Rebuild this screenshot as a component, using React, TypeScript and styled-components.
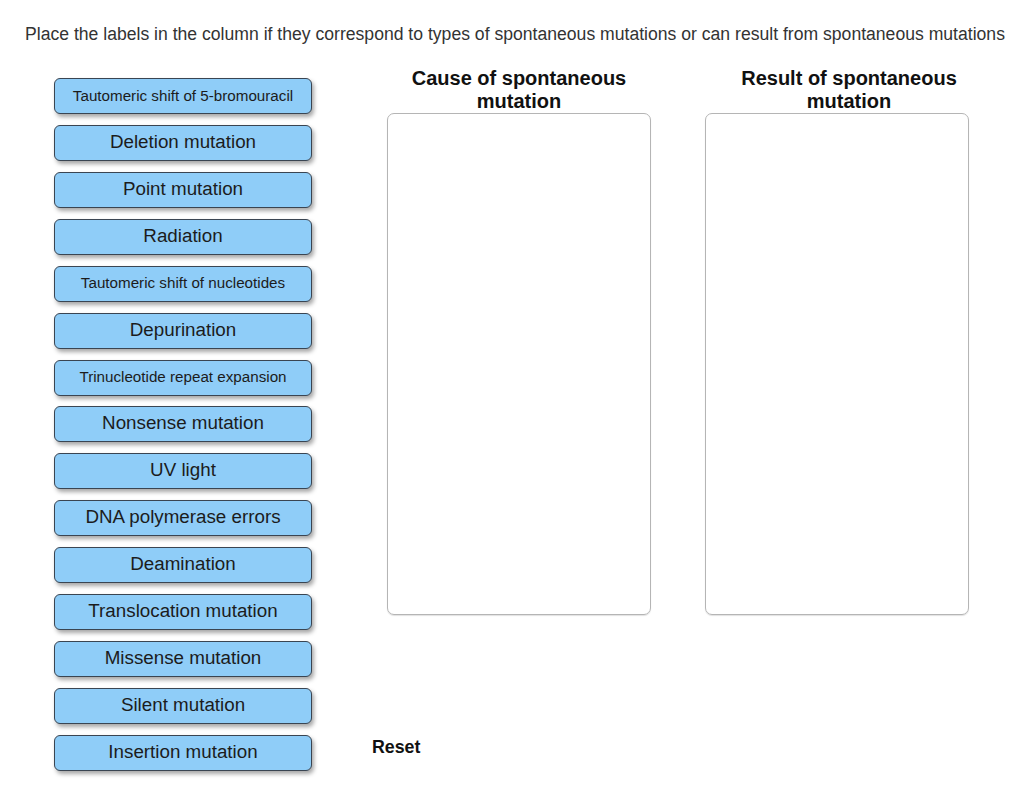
import styled, { createGlobalStyle } from "styled-components"

const labels: { text: string; small?: boolean }[] = [
    { text: "Tautomeric shift of 5-bromouracil", small: true },
    { text: "Deletion mutation" },
    { text: "Point mutation" },
    { text: "Radiation" },
    { text: "Tautomeric shift of nucleotides", small: true },
    { text: "Depurination" },
    { text: "Trinucleotide repeat expansion", small: true },
    { text: "Nonsense mutation" },
    { text: "UV light" },
    { text: "DNA polymerase errors" },
    { text: "Deamination" },
    { text: "Translocation mutation" },
    { text: "Missense mutation" },
    { text: "Silent mutation" },
    { text: "Insertion mutation" },
]

// offset nudges the heading sideways over its drop zone
const columns = [
    { title: "Cause of spontaneous mutation", offset: 0 },
    { title: "Result of spontaneous mutation", offset: 24 },
]

export default function App() {
    return (
        <>
            <GlobalStyle />
            <Page>
                <Instructions>
                    Place the labels in the column if they correspond to types of spontaneous mutations or can result from spontaneous mutations
                </Instructions>
                <Workspace>
                    <LabelList>
                        {labels.map((l) => (
                            <Label key={l.text} $small={l.small}>{l.text}</Label>
                        ))}
                    </LabelList>
                    <Board>
                        <Columns>
                            {columns.map((c) => (
                                <Column key={c.title}>
                                    <ColumnTitle $offset={c.offset}>{c.title}</ColumnTitle>
                                    <DropZone />
                                </Column>
                            ))}
                        </Columns>
                        <ResetButton type="button">Reset</ResetButton>
                    </Board>
                </Workspace>
            </Page>
        </>
    )
}

const GlobalStyle = createGlobalStyle`
    body{
        margin: 0;
        background: #fff;
        font-family: "Liberation Sans", Arial, sans-serif;
    }
`
const Page = styled.div`
    width: 1024px;
    height: 801px;
    padding-top: 24px;
    box-sizing: border-box;
`
const Instructions = styled.p`
    margin: 0 0 0 25px;
    font-size: 17.6px;
    line-height: 20px;
    color: #333;
    white-space: nowrap;
`
const Workspace = styled.div`
    display: flex;
    margin-top: 23px;
`
const LabelList = styled.div`
    display: flex;
    flex-direction: column;
    gap: 10.93px;
    margin: 11px 0 0 54px;
`
const Label = styled.div<{ $small?: boolean }>`
    width: 258px;
    height: 36px;
    box-sizing: border-box;
    padding-bottom: 2px;
    display: flex;
    align-items: center;
    justify-content: center;
    background: #8fcdf8;
    border: 1px solid #3a4552;
    border-radius: 6px;
    box-shadow: 2px 3px 4px rgba(0, 0, 0, 0.35);
    color: #1c1c1c;
    font-size: ${(p) => (p.$small ? "15.2px" : "18.8px")};
`
const Board = styled.div`
    display: flex;
    flex-direction: column;
    margin-left: 60px;
`
const Columns = styled.div`
    display: flex;
    gap: 54px;
    margin-left: 15px;
`
const Column = styled.div`
    width: 264px;
    display: flex;
    flex-direction: column;
    align-items: center;
`
const ColumnTitle = styled.h2<{ $offset: number }>`
    margin: 0 0 0 ${(p) => p.$offset}px;
    width: 240px;
    height: 46px;
    font-size: 20px;
    line-height: 23px;
    font-weight: bold;
    text-align: center;
    color: #111;
`
const DropZone = styled.div`
    width: 264px;
    height: 502px;
    box-sizing: border-box;
    border: 1px solid #b5b5b5;
    border-radius: 7px;
    box-shadow: 0 1px 1px rgba(0, 0, 0, 0.12);
`
const ResetButton = styled.button`
    align-self: flex-start;
    margin-top: 122px;
    padding: 0;
    border: none;
    background: none;
    font-family: "Liberation Sans", Arial, sans-serif;
    font-size: 17.8px;
    font-weight: bold;
    color: #111;
    cursor: pointer;
`
